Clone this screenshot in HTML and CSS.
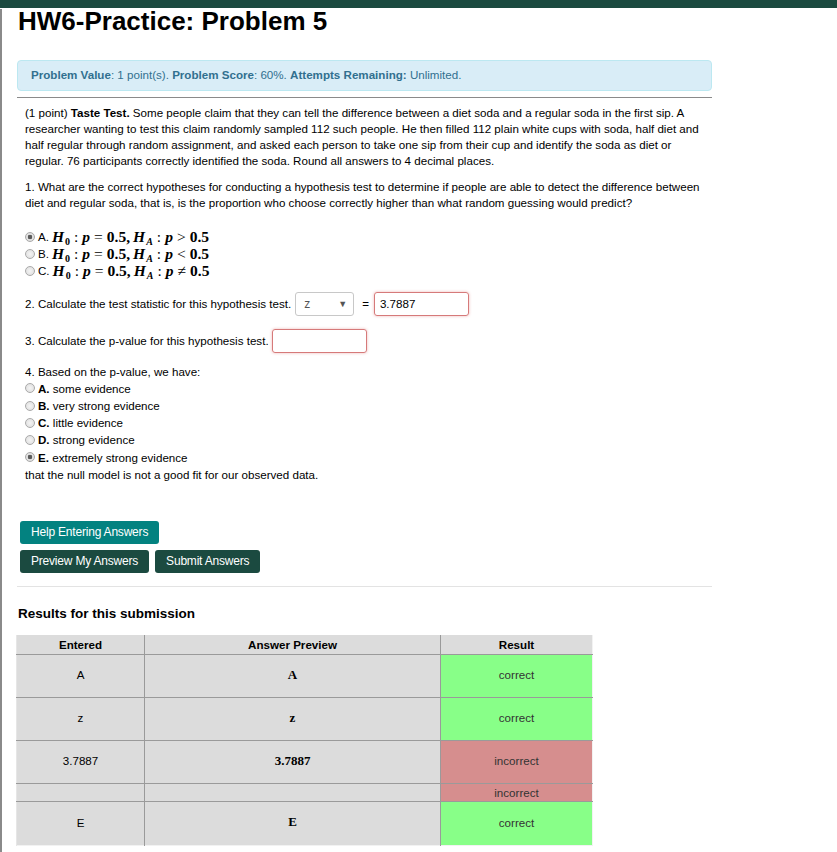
FILE: index.html
```html
<!DOCTYPE html>
<html>
<head>
<meta charset="utf-8">
<title>HW6-Practice: Problem 5</title>
<link rel="stylesheet" href="styles.css">
</head>
<body>
<div class="topbar"></div>
<div class="page">
  <h1 class="title">HW6-Practice: Problem 5</h1>
  <div class="alert">
    <b>Problem Value</b>: 1 point(s). <b>Problem Score</b>: 60%. <b>Attempts Remaining:</b> Unlimited.
  </div>
  <div class="problem">
    <p class="para">(1 point) <b>Taste Test.</b> Some people claim that they can tell the difference between a diet soda and a regular soda in the first sip. A researcher wanting to test this claim randomly sampled 112 such people. He then filled 112 plain white cups with soda, half diet and half regular through random assignment, and asked each person to take one sip from their cup and identify the soda as diet or regular. 76 participants correctly identified the soda. Round all answers to 4 decimal places.</p>
    <p class="para q1">1. What are the correct hypotheses for conducting a hypothesis test to determine if people are able to detect the difference between diet and regular soda, that is, is the proportion who choose correctly higher than what random guessing would predict?</p>
    <div class="mathopts">
      <label class="opt"><input type="radio" name="q1" checked><span class="letter">A.</span> <span class="math"><i>H</i><sub>0</sub><span class="rel">:</span><i>p</i><span class="rel">=</span>0.5,<span class="thin"></span><i>H</i><sub><i>A</i></sub><span class="rel">:</span><i>p</i><span class="rel">&gt;</span>0.5</span></label>
      <label class="opt"><input type="radio" name="q1"><span class="letter">B.</span> <span class="math"><i>H</i><sub>0</sub><span class="rel">:</span><i>p</i><span class="rel">=</span>0.5,<span class="thin"></span><i>H</i><sub><i>A</i></sub><span class="rel">:</span><i>p</i><span class="rel">&lt;</span>0.5</span></label>
      <label class="opt"><input type="radio" name="q1"><span class="letter">C.</span> <span class="math"><i>H</i><sub>0</sub><span class="rel">:</span><i>p</i><span class="rel">=</span>0.5,<span class="thin"></span><i>H</i><sub><i>A</i></sub><span class="rel">:</span><i>p</i><span class="rel">&ne;</span>0.5</span></label>
    </div>
    <div class="qrow q2">
      <span>2. Calculate the test statistic for this hypothesis test.</span>
      <span class="select"><span class="selval">z</span><span class="arrow">&#9660;</span></span>
      <span class="eq">=</span>
      <span class="field bad w95">3.7887</span>
    </div>
    <div class="qrow q3">
      <span>3. Calculate the p-value for this hypothesis test.</span>
      <span class="field bad w95 empty"></span>
    </div>
    <div class="q4">
      <div class="line">4. Based on the p-value, we have:</div>
      <label class="opt"><input type="radio" name="q4"><b>A.</b>&nbsp;some evidence</label>
      <label class="opt"><input type="radio" name="q4"><b>B.</b>&nbsp;very strong evidence</label>
      <label class="opt"><input type="radio" name="q4"><b>C.</b>&nbsp;little evidence</label>
      <label class="opt"><input type="radio" name="q4"><b>D.</b>&nbsp;strong evidence</label>
      <label class="opt"><input type="radio" name="q4" checked><b>E.</b>&nbsp;extremely strong evidence</label>
      <div class="line">that the null model is not a good fit for our observed data.</div>
    </div>
  </div>
  <div class="buttons">
    <div class="btnrow"><button class="btn teal">Help Entering Answers</button></div>
    <div class="btnrow"><button class="btn dark">Preview My Answers</button><button class="btn dark">Submit Answers</button></div>
  </div>
  <hr class="sep">
  <h3 class="results-title">Results for this submission</h3>
  <table class="results">
    <tr class="head"><th class="c1">Entered</th><th class="c2">Answer Preview</th><th class="c3">Result</th></tr>
    <tr class="row"><td>A</td><td class="prev">A</td><td class="ok">correct</td></tr>
    <tr class="row"><td>z</td><td class="prev">z</td><td class="ok">correct</td></tr>
    <tr class="row"><td>3.7887</td><td class="prev">3.7887</td><td class="bad">incorrect</td></tr>
    <tr class="short"><td></td><td></td><td class="bad">incorrect</td></tr>
    <tr class="row last"><td>E</td><td class="prev">E</td><td class="ok">correct</td></tr>
  </table>
</div>
</body>
</html>
```

FILE: styles.css
```css
html, body {
  margin: 0;
  padding: 0;
  background: #fff;
}
body {
  font-family: "Liberation Sans", Arial, sans-serif;
  font-size: 11.6px;
  color: #000;
}
.topbar {
  height: 8px;
  background: #1b4a40;
}
.page {
  border-left: 2px solid #8a8a8a;
  padding-left: 15px;
  width: 695px;
  min-height: 844px;
}
.title {
  margin: 1px 0 0 1px;
  font-size: 26px;
  line-height: 24px;
  font-weight: bold;
  color: #000;
}
.alert {
  margin-top: 27px;
  background: #d9edf7;
  border: 1px solid #bce8f1;
  border-radius: 4px;
  color: #31708f;
  padding: 8px 13px 9px 13px;
  line-height: 12px;
}
.problem {
  margin-top: 6px;
  border-top: 1px solid #8a8a8a;
  padding: 7px 8px 0 8px;
}
.para {
  margin: 0;
  line-height: 16px;
}
.q1 {
  margin-top: 10px;
}
.mathopts {
  margin-top: 17px;
}
.opt {
  display: flex;
  align-items: center;
  height: 17.2px;
  line-height: 17px;
}
.opt input {
  -webkit-appearance: none;
  appearance: none;
  width: 10px;
  height: 10px;
  margin: 0 3px 0 0;
  border: 1px solid #a9a9a9;
  border-radius: 50%;
  background: radial-gradient(circle, #f4f4f4 0%, #dcdcdc 100%);
  box-sizing: border-box;
  flex: none;
}
.opt input:checked {
  background: radial-gradient(circle, #5a5a5a 0, #5a5a5a 2px, #e6e6e6 2.6px, #d6d6d6 100%);
}
.letter {
  margin-right: 3px;
}
.math {
  font-family: "Liberation Serif", "Times New Roman", serif;
  font-size: 15.5px;
  font-weight: bold;
  white-space: nowrap;
}
.math i {
  font-style: italic;
}
.math sub {
  font-size: 10px;
  vertical-align: -3px;
  line-height: 0;
  margin-left: 1px;
}
.math .rel {
  display: inline-block;
  padding: 0 4px;
  font-weight: normal;
}
.math .thin {
  display: inline-block;
  width: 3px;
}
.qrow {
  display: flex;
  align-items: center;
  height: 26px;
}
.q2 {
  margin-top: 11px;
}
.q3 {
  margin-top: 11px;
}
.select {
  display: inline-flex;
  align-items: center;
  justify-content: space-between;
  box-sizing: border-box;
  width: 59px;
  height: 24px;
  margin-left: 4px;
  border: 1px solid #c8c8c8;
  border-radius: 3px;
  padding: 0 6px 0 8px;
  color: #555;
}
.selval {
  font-size: 12px;
}
.arrow {
  font-size: 9px;
  color: #555;
}
.eq {
  margin: 0 5px 0 8px;
}
.field {
  display: inline-flex;
  align-items: center;
  box-sizing: border-box;
  height: 24px;
  border-radius: 3px;
  padding: 0 5px;
  color: #000;
}
.field.bad {
  border: 1px solid #d67a7a;
  box-shadow: 0 0 3px rgba(214, 90, 90, 0.45);
}
.w95 {
  width: 95px;
}
.q3 .field {
  margin-left: 3px;
}
.q4 {
  margin-top: 9px;
}
.q4 .line {
  height: 17.2px;
  line-height: 17px;
}
.buttons {
  margin-top: 38px;
  display: flex;
  flex-direction: column;
  gap: 6px;
  padding-left: 3px;
}
.btnrow {
  display: flex;
  gap: 6px;
}
.btn {
  font-family: "Liberation Sans", Arial, sans-serif;
  font-size: 12px;
  color: #fff;
  height: 23px;
  padding: 0 11px;
  border: none;
  border-radius: 3px;
  letter-spacing: -0.2px;
}
.btn.teal {
  background: #038280;
}
.btn.dark {
  background: #1b4a40;
}
.sep {
  margin: 13px 0 0 0;
  border: none;
  border-top: 1px solid #e3e3e3;
  height: 0;
}
.results-title {
  margin: 19px 0 0 1px;
  font-size: 13.5px;
  line-height: 16px;
  font-weight: bold;
}
.results {
  margin: 13px 0 0 -1px;
  border-collapse: collapse;
  border-right: 1px solid #f2f2f2;
  border-bottom: 1px solid #f2f2f2;
}
.results th, .results td {
  background: #dcdcdc;
  text-align: center;
  vertical-align: middle;
  padding: 0;
  border: 1px solid #9a9a9a;
  font-size: 11.6px;
}
.results th {
  font-weight: bold;
  height: 19px;
  border-top: none;
  border-left: 1px solid #e6e6e6;
}
.results tr > :first-child {
  border-left: 1px solid #e6e6e6;
}
.results tr > :last-child {
  border-right: none;
}
.results tr:last-child td {
  border-bottom: none;
}
.c1 { width: 127px; }
.c2 { width: 295px; }
.c3 { width: 151px; }
.results .row td {
  height: 40px;
  padding-bottom: 2px;
}
.results .row.last td {
  height: 41px;
  padding-bottom: 2px;
}
.results .short td {
  height: 17px;
}
.results .prev {
  font-family: "Liberation Serif", "Times New Roman", serif;
  font-weight: bold;
  font-size: 13px;
}
.results .ok {
  background: #88ff88;
  color: #333;
}
.results .bad {
  background: #d68e8e;
  color: #333;
}
```
